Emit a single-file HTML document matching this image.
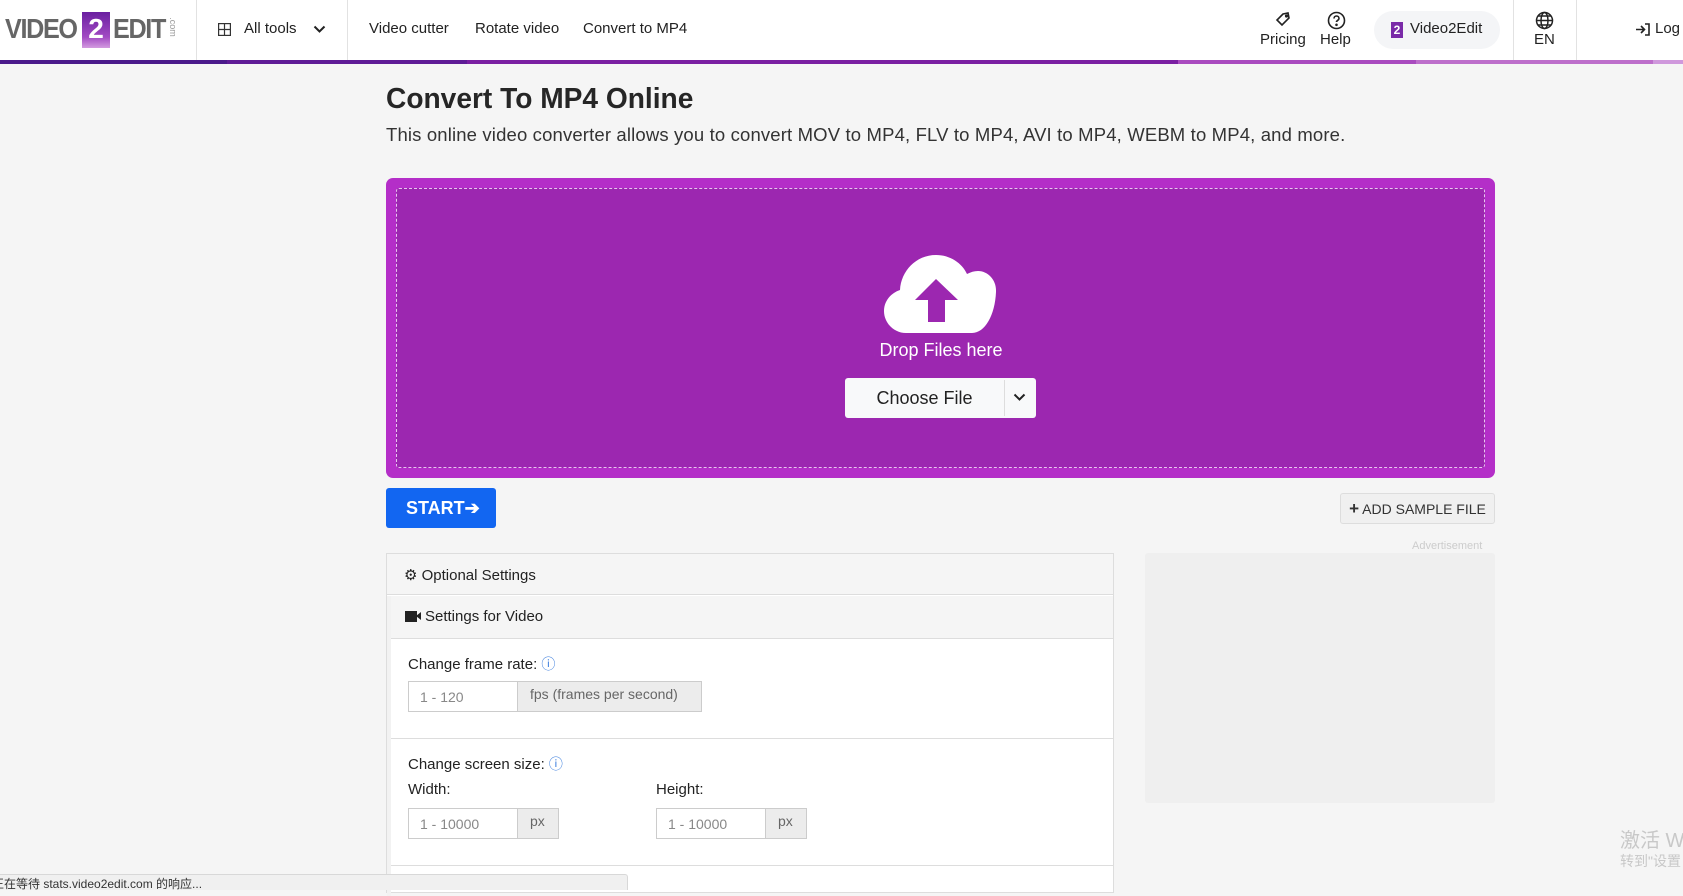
<!DOCTYPE html>
<html><head><meta charset="utf-8"><style>
*{box-sizing:border-box;margin:0;padding:0}
body{width:1683px;height:889px;overflow:hidden;background:#f5f5f5;font-family:"Liberation Sans","Noto Sans CJK SC",sans-serif;color:#222;position:relative}
.abs{position:absolute}
.hdr{left:0;top:0;width:1683px;height:60px;background:#fff}
.bar{left:0;top:60px;height:4px}
.nav{font-size:15px;color:#222;top:20px}
.vl{top:0;width:1px;height:60px;background:#e2e2e2}
.input{position:absolute;background:#fff;border:1px solid #ccc;color:#888;font-size:14px;padding:7px 11px}
.addon{position:absolute;background:#ececec;border:1px solid #ccc;color:#666;font-size:14px;padding:4px 12px}
</style></head><body>
<div class="abs hdr"></div>
<div class="abs bar" style="width:227px;background:#4b1a8b"></div>
<div class="abs bar" style="left:227px;width:240px;background:#5f1c96"></div>
<div class="abs bar" style="left:467px;width:711px;background:#7a1fa2"></div>
<div class="abs bar" style="left:1178px;width:238px;background:#a94bbf"></div>
<div class="abs bar" style="left:1416px;width:237px;background:#bd6fcb"></div>
<div class="abs bar" style="left:1653px;width:30px;background:#cf98dc"></div>
<!-- logo -->
<div class="abs" style="left:5px;top:13px;font-weight:bold;font-size:28px;color:#666;letter-spacing:-1.5px;transform:scaleX(0.9);transform-origin:left">VIDEO</div>
<div class="abs" style="left:82px;top:12px;width:28px;height:36px;background:linear-gradient(#6a1fa0,#a24bc3 70%,#d39be0);color:#fff;font-weight:bold;font-size:28px;text-align:center;line-height:34px">2</div>
<div class="abs" style="left:113px;top:13px;font-weight:bold;font-size:28px;color:#666;letter-spacing:-1.5px;transform:scaleX(0.9);transform-origin:left">EDIT</div>
<div class="abs" style="left:163px;top:22px;font-size:9px;color:#999;transform:rotate(90deg)">.com</div>
<div class="abs vl" style="left:196px"></div>
<svg class="abs" style="left:218px;top:23px" width="13" height="13" viewBox="0 0 13 13" fill="none" stroke="#333" stroke-width="1.2"><rect x=".6" y=".6" width="11.8" height="11.8"/><path d="M6.5 0v13M0 6.5h13"/></svg>
<div class="abs nav" style="left:244px">All tools</div>
<svg class="abs" style="left:313px;top:25px" width="13" height="9" viewBox="0 0 13 9"><path d="M1.5 1.5l5 5 5-5" stroke="#222" stroke-width="2" fill="none"/></svg>
<div class="abs vl" style="left:347px"></div>
<div class="abs nav" style="left:369px">Video cutter</div>
<div class="abs nav" style="left:475px">Rotate video</div>
<div class="abs nav" style="left:583px">Convert to MP4</div>
<svg class="abs" style="left:1274px;top:11px" width="18" height="18" viewBox="0 0 18 18" fill="none" stroke="#222" stroke-width="1.6"><path d="M9 3l5-1 1 5-7 7-5-5z"/><circle cx="12.5" cy="5" r=".8"/></svg>
<div class="abs nav" style="left:1260px;top:31px">Pricing</div>
<svg class="abs" style="left:1327px;top:11px" width="19" height="19" viewBox="0 0 19 19" fill="none" stroke="#222" stroke-width="1.6"><circle cx="9.5" cy="9.5" r="8"/><path d="M7 7.5a2.5 2.5 0 115 0c0 1.8-2.5 1.8-2.5 3.5"/><circle cx="9.5" cy="13.8" r=".5" fill="#222"/></svg>
<div class="abs nav" style="left:1320px;top:31px">Help</div>
<div class="abs" style="left:1374px;top:11px;width:126px;height:38px;border-radius:19px;background:#f4f5f7"></div>
<div class="abs" style="left:1391px;top:22px;width:12px;height:16px;background:#7a2aa8;color:#fff;font-size:12px;font-weight:bold;text-align:center;line-height:16px">2</div>
<div class="abs nav" style="left:1410px;top:20px">Video2Edit</div>
<div class="abs vl" style="left:1513px"></div>
<svg class="abs" style="left:1535px;top:11px" width="19" height="19" viewBox="0 0 19 19" fill="none" stroke="#222" stroke-width="1.5"><circle cx="9.5" cy="9.5" r="8"/><ellipse cx="9.5" cy="9.5" rx="3.5" ry="8"/><path d="M1.5 9.5h16M3 5h13M3 14h13"/></svg>
<div class="abs nav" style="left:1534px;top:31px">EN</div>
<div class="abs vl" style="left:1576px"></div>
<svg class="abs" style="left:1635px;top:23px" width="15" height="13" viewBox="0 0 15 13" fill="none" stroke="#222" stroke-width="1.6"><path d="M1 6.5h8M6 3l3.5 3.5L6 10M10 1h4v11h-4"/></svg>
<div class="abs nav" style="left:1655px">Log</div>

<div class="abs" style="left:386px;top:83px;font-size:29px;font-weight:bold;color:#262626;transform:scaleX(0.97);transform-origin:left">Convert To MP4 Online</div>
<div class="abs" style="left:386px;top:124px;font-size:18.5px;color:#333;letter-spacing:0.15px">This online video converter allows you to convert MOV to MP4, FLV to MP4, AVI to MP4, WEBM to MP4, and more.</div>

<div class="abs" style="left:386px;top:178px;width:1109px;height:300px;background:#b42ec8;border-radius:7px"></div>
<div class="abs" style="left:396px;top:188px;width:1089px;height:280px;background:#9c27b0;border:1px dashed #e8c6ef;border-radius:3px"></div>
<svg class="abs" style="left:884px;top:255px" width="112" height="78" viewBox="0 0 112 78"><path d="M22 78C10 78 0 68 0 56c0-10 7-18 16-21C17 16 32 0 52 0c14 0 26 8 31 19 4-2 7-3 11-3 10 0 18 9 18 19v2c0 0 0 0 0 0C111 60 101 78 88 78z" fill="#fff"/><path d="M52 24L31 45h13v22h17V45h13z" fill="#9c27b0"/></svg>
<div class="abs" style="left:846px;top:340px;width:190px;text-align:center;color:#fff;font-size:18px">Drop Files here</div>
<div class="abs" style="left:845px;top:378px;width:191px;height:40px;background:#f8f9fa;border-radius:3px"></div>
<div class="abs" style="left:1004px;top:380px;width:1px;height:36px;background:#ddd"></div>
<div class="abs" style="left:845px;top:388px;width:159px;text-align:center;font-size:18px;color:#222">Choose File</div>
<svg class="abs" style="left:1013px;top:393px" width="13" height="9" viewBox="0 0 13 9"><path d="M1.5 1.5l5 5 5-5" stroke="#222" stroke-width="2" fill="none"/></svg>

<div class="abs" style="left:386px;top:488px;width:110px;height:40px;background:#1266f1;border-radius:3px;color:#fff;font-weight:bold;font-size:18px;line-height:40px;padding-left:20px">START➔</div>
<div class="abs" style="left:1340px;top:493px;width:155px;height:31px;background:#f0f0f0;border:1px solid #ddd;border-radius:3px;font-size:14px;color:#333;line-height:29px;text-align:center"><b style="font-size:17px">+</b> ADD SAMPLE FILE</div>

<div class="abs" style="left:1412px;top:540px;font-size:11px;color:#ccc">Advertisement</div>
<div class="abs" style="left:1145px;top:553px;width:350px;height:250px;background:#efefef;border-radius:3px"></div>

<div class="abs" style="left:386px;top:553px;width:728px;height:340px;background:#fff;border:1px solid #ddd"></div>
<div class="abs" style="left:387px;top:554px;width:726px;height:41px;background:#f5f5f5;border-bottom:1px solid #ddd"></div>
<div class="abs" style="left:404px;top:566px;font-size:15px;color:#222">⚙ Optional Settings</div>
<div class="abs" style="left:387px;top:596px;width:4px;height:300px;background:#f2f2f2"></div>
<div class="abs" style="left:391px;top:596px;width:722px;height:43px;background:#f5f5f5;border-bottom:1px solid #ddd"></div>
<div class="abs" style="left:405px;top:611px;width:12px;height:11px;background:#222"></div>
<div class="abs" style="left:416px;top:612px;width:0;height:0;border-top:4px solid transparent;border-bottom:4px solid transparent;border-right:5px solid #222"></div>
<div class="abs" style="left:425px;top:608px;font-size:15px;color:#222">Settings for Video</div>

<div class="abs" style="left:408px;top:654px;font-size:15px;color:#222">Change frame rate: <span style="color:#3b7ddd;font-size:14px">ⓘ</span></div>
<div class="input" style="left:408px;top:681px;width:110px;height:31px">1 - 120</div>
<div class="addon" style="left:517px;top:681px;width:185px;height:31px">fps (frames per second)</div>
<div class="abs" style="left:391px;top:738px;width:722px;height:1px;background:#ddd"></div>
<div class="abs" style="left:408px;top:754px;font-size:15px;color:#222">Change screen size: <span style="color:#3b7ddd;font-size:14px">ⓘ</span></div>
<div class="abs" style="left:408px;top:781px;font-size:15px;color:#222">Width:</div>
<div class="abs" style="left:656px;top:781px;font-size:15px;color:#222">Height:</div>
<div class="input" style="left:408px;top:808px;width:110px;height:31px">1 - 10000</div>
<div class="addon" style="left:517px;top:808px;width:42px;height:31px">px</div>
<div class="input" style="left:656px;top:808px;width:110px;height:31px">1 - 10000</div>
<div class="addon" style="left:765px;top:808px;width:42px;height:31px">px</div>
<div class="abs" style="left:391px;top:865px;width:722px;height:1px;background:#ddd"></div>

<div class="abs" style="left:1620px;top:824px;font-size:20px;color:#c8c8c8;white-space:nowrap">激活 W</div>
<div class="abs" style="left:1620px;top:851px;font-size:14px;color:#c8c8c8;white-space:nowrap">转到"设置</div>

<div class="abs" style="left:0;top:874px;width:628px;height:16px;background:#f0f0f0;border-top:1px solid #d8d8d8;border-right:1px solid #d8d8d8;border-top-right-radius:3px"></div>
<div class="abs" style="left:-8px;top:875px;font-size:12px;color:#333;white-space:nowrap">正在等待 stats.video2edit.com 的响应...</div>
</body></html>
